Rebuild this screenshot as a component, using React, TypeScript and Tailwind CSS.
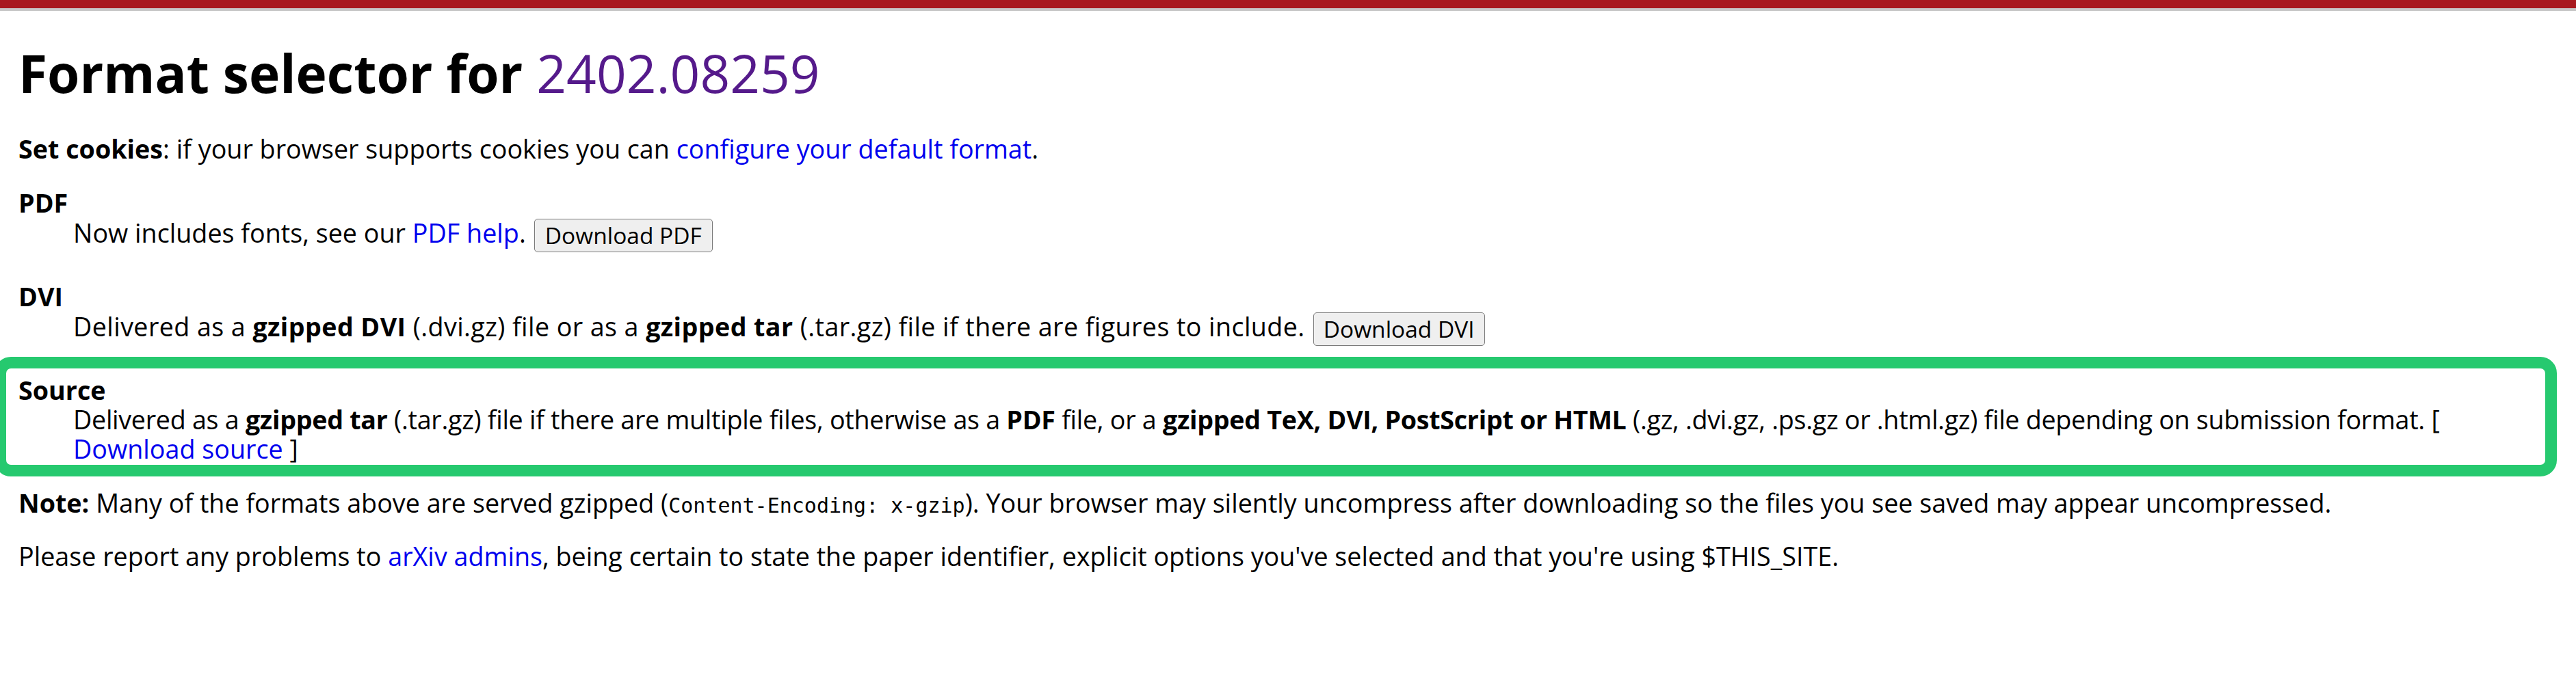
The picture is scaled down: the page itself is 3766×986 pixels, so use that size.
import React from "react";

const Btn = ({ label, w }: { label: string; w: string }) => (
  <button
    className={`ml-[12px] mt-px h-[49px] ${w} shrink-0 rounded-[5px] border border-[#7a7a7a] bg-[#efefef] text-[33.5px] leading-[47px] text-black font-['Open_Sans',sans-serif] tracking-normal`}
  >
    {label}
  </button>
);

export default function App() {
  return (
    <div className="min-h-screen w-full bg-white text-black font-['Open_Sans',sans-serif] text-[37.7px]">
      <div className="h-[12px] bg-[#a8191f]" />
      <div className="h-[4px] bg-[#c8c8c8]" />
      <div className="pl-[27px]">
        <h1 className="mt-[50px] h-[80px] whitespace-nowrap text-[76.6px] font-bold leading-[80px]">
          Format selector for <a className="font-normal text-[#551a8b]">2402.08259</a>
        </h1>
        <p className="mt-[50px] h-[43px] whitespace-nowrap leading-[43px]">
          <b>Set cookies</b>: if your browser supports cookies you can{" "}
          <a className="text-[#0000ee]">configure your default format</a>.
        </p>
        <dl>
          <dt className="mt-[36px] h-[43px] font-bold leading-[43px]">PDF</dt>
          <dd className="mt-px flex h-[43px] items-start pl-[80px]">
            <span className="whitespace-nowrap leading-[43px]">
              Now includes fonts, see our <a className="text-[#0000ee]">PDF help</a>.
            </span>
            <Btn label="Download PDF" w="w-[261px]" />
          </dd>
          <dt className="mt-[50px] h-[43px] font-bold leading-[43px]">DVI</dt>
          <dd className="mt-px flex h-[43px] items-start pl-[80px]">
            <span className="whitespace-nowrap leading-[43px] tracking-[0.4px]">
              Delivered as a <b>gzipped DVI</b> (.dvi.gz) file or as a <b>gzipped tar</b> (.tar.gz) file if there
              are figures to include.
            </span>
            <Btn label="Download DVI" w="w-[251px]" />
          </dd>
          <div className="ml-[-35px] mt-[23px] w-[3746px] rounded-[24px] border-[17px] border-[#26c96f] pb-[2px] pl-[18px] pt-[10px]">
            <dt className="h-[43px] font-bold leading-[43px]">Source</dt>
            <dd className="pl-[80px] leading-[43px]">
              <div className="h-[43px] whitespace-nowrap tracking-[-0.3px]">
                Delivered as a <b>gzipped tar</b> (.tar.gz) file if there are multiple files, otherwise as a{" "}
                <b>PDF</b> file, or a <b>gzipped TeX, DVI, PostScript or HTML</b> (.gz, .dvi.gz, .ps.gz or .html.gz)
                file depending on submission format. [
              </div>
              <div className="h-[43px] whitespace-nowrap">
                <a className="text-[#0000ee]">Download source</a> ]
              </div>
            </dd>
          </div>
        </dl>
        <p className="mt-[17px] h-[43px] whitespace-nowrap leading-[43px]">
          <b>Note:</b> Many of the formats above are served gzipped (
          <code className="font-['DejaVu_Sans_Mono',monospace] text-[30px]">Content-Encoding: x-gzip</code>). Your
          browser may silently uncompress after downloading so the files you see saved may appear uncompressed.
        </p>
        <p className="mt-[35px] h-[43px] whitespace-nowrap leading-[43px]">
          Please report any problems to <a className="text-[#0000ee]">arXiv admins</a>, being certain to state the
          paper identifier, explicit options you've selected and that you're using $THIS_SITE.
        </p>
      </div>
    </div>
  );
}
